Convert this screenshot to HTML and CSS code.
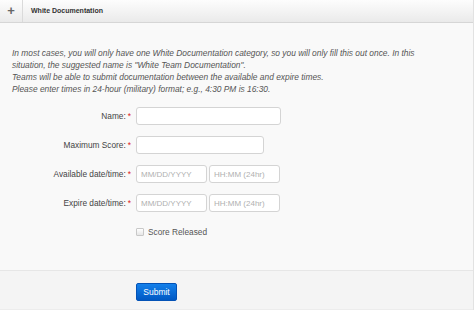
FILE: index.html
```html
<!DOCTYPE html>
<html>

<head>
    <meta charset="UTF-8">
    <title>White Documentation</title>

    <link rel="stylesheet" href="styles.css">
</head>

<body>
<div class="widget">

    <div class="widget-head"> <!-- 상단 제목 줄 -->
        <span class="head-icon">+</span>
        <h5>White Documentation</h5>
    </div>

    <div class="widget-body">
        <p class="note">
            In most cases, you will only have one White Documentation category, so you will only fill this out once. In this<br>
            situation, the suggested name is "White Team Documentation".<br>
            Teams will be able to submit documentation between the available and expire times.<br>
            Please enter times in 24-hour (military) format; e.g., 4:30 PM is 16:30.
        </p>

        <div class="row">
            <label class="lbl">Name:<span class="req">*</span></label>
            <input class="field name-field" type="text">
        </div>

        <div class="row">
            <label class="lbl">Maximum Score:<span class="req">*</span></label>
            <input class="field score-field" type="text">
        </div>

        <div class="row">
            <label class="lbl">Available date/time:<span class="req">*</span></label>
            <input class="field date-field" type="text" placeholder="MM/DD/YYYY">
            <input class="field time-field" type="text" placeholder="HH:MM (24hr)">
        </div>

        <div class="row">
            <label class="lbl">Expire date/time:<span class="req">*</span></label>
            <input class="field date-field" type="text" placeholder="MM/DD/YYYY">
            <input class="field time-field" type="text" placeholder="HH:MM (24hr)">
        </div>

        <div class="row">
            <span class="lbl"></span>
            <label class="check"><span class="box"></span>Score Released</label>
        </div>
    </div>

    <div class="form-actions">
        <button class="btn-submit">Submit</button>
    </div>

</div>
</body>

</html>
```

FILE: styles.css
```css
body {
    margin: 0;
    background: #fff;
    font-family: "Liberation Sans", Arial, sans-serif;
    color: #333;
}

.widget {
    width: 473px;
    border-right: 1px solid #e2e2e2;
    background: #f9f9f9;
}

.widget-head {
    display: flex;
    height: 22px;
    border-bottom: 1px solid #d6d6d6;
    background: linear-gradient(#fdfdfd, #eaeaea);
}

.head-icon {
    width: 22px;
    border-right: 1px solid #dadada;
    text-align: center;
    line-height: 21px;
    font-size: 13px;
    font-weight: bold;
    color: #666;
}

.widget-head h5 {
    margin: 0 0 0 8px;
    line-height: 22px;
    font-size: 7px;
    color: #333;
}

.widget-body {
    padding: 24px 0 29px 12px;
}

.note {
    margin: 0 0 12px;
    font-size: 8.4px;
    line-height: 12px;
    font-style: italic;
    color: #555;
    white-space: nowrap;
}

.row {
    display: flex;
    align-items: center;
    gap: 2px;
    height: 18px;
    margin-bottom: 11px;
}

.row:last-child {
    margin-bottom: 0;
}

.lbl {
    width: 119px;
    margin-right: 3px;
    text-align: right;
    font-size: 8.3px;
    color: #444;
}

.req {
    margin-left: 2px;
    color: #d22;
}

.field {
    box-sizing: border-box;
    height: 18px;
    padding: 0 4px;
    border: 1px solid #d4d4d4;
    border-radius: 3px;
    background: #fff;
    font-family: "Liberation Sans", Arial, sans-serif;
    font-size: 8px;
    color: #555;
}

.field::placeholder {
    color: #b0b0b0;
}

.name-field {
    width: 145px;
}

.score-field {
    width: 128px;
}

.date-field,
.time-field {
    width: 71px;
}

.check {
    display: flex;
    align-items: center;
    gap: 4px;
    font-size: 8.3px;
    color: #555;
}

.box {
    width: 6px;
    height: 6px;
    border: 1px solid #c8c8c8;
    border-radius: 1px;
    background: linear-gradient(#fff, #e6e6e6);
}

.form-actions {
    height: 38px;
    padding-left: 136px;
    border-top: 1px solid #e6e6e6;
    border-bottom: 1px solid #ececec;
    background: #f4f4f4;
}

.btn-submit {
    margin-top: 12px;
    width: 41px;
    height: 18px;
    padding: 0;
    border: 1px solid #0352b6;
    border-radius: 2px;
    background: linear-gradient(#1480ea, #0059c4);
    font-family: "Liberation Sans", Arial, sans-serif;
    font-size: 8.5px;
    color: #fff;
}
```
